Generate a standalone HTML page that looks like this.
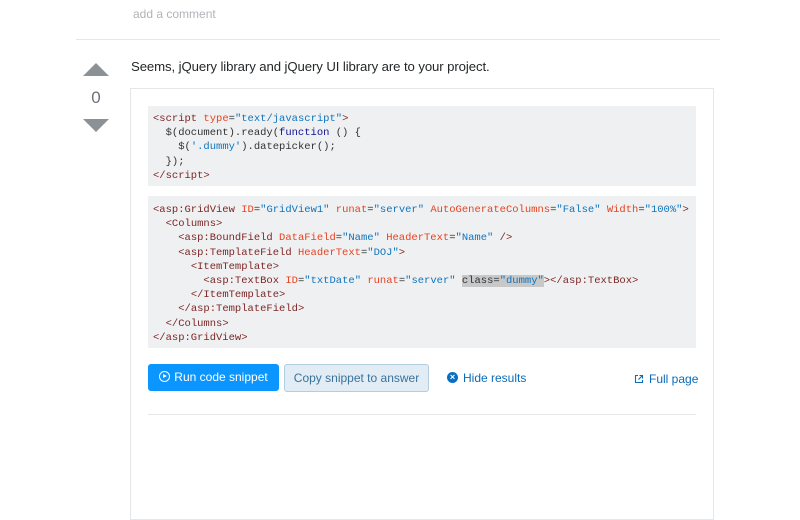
<!DOCTYPE html>
<html><head><style>
body{margin:0;width:800px;height:505px;background:#fff;position:relative;overflow:hidden;font-family:"Liberation Sans",sans-serif}
.a{position:absolute}
pre{margin:0;font-family:"Liberation Mono",monospace;font-size:10.5px;line-height:14.2px;color:#303336}
.t{color:#7d2727}.at{color:#e64320}.s{color:#0f74bd}.k{color:#101094}
</style></head><body>
<div class="a" style="left:133px;top:7px;font-size:12px;color:#b0b4b8">add a comment</div>
<div class="a" style="left:76px;top:39px;width:644px;height:1px;background:#e4e6e8"></div>
<svg class="a" style="left:82px;top:62px" width="28" height="72"><path d="M1 14 L14 1 L27 14Z" fill="#8c9196"/><path d="M1 57 L27 57 L14 70Z" fill="#8c9196"/></svg>
<div class="a" style="left:82px;top:88px;width:28px;text-align:center;font-size:17px;color:#6a737c">0</div>
<div class="a" style="left:131px;top:59px;font-size:13.2px;letter-spacing:-0.1px;color:#242729">Seems, jQuery library and jQuery UI library are to your project.</div>
<div class="a" style="left:130px;top:88px;width:582px;height:430px;border:1px solid #e4e6e8"></div>
<div class="a" style="left:148px;top:106px;width:548px;height:80px;background:#eff0f1"></div>
<pre class="a" style="left:153px;top:112px"><span class="t">&lt;script</span> <span class="at">type</span>=<span class="s">"text/javascript"</span><span class="t">&gt;</span>
  $(document).ready(<span class="k">function</span> () {
    $(<span class="s">'.dummy'</span>).datepicker();
  });
<span class="t">&lt;/script&gt;</span></pre>
<div class="a" style="left:148px;top:196px;width:548px;height:152px;background:#eff0f1"></div>
<pre class="a" style="left:153px;top:203px"><span class="t">&lt;asp:GridView</span> <span class="at">ID</span>=<span class="s">"GridView1"</span> <span class="at">runat</span>=<span class="s">"server"</span> <span class="at">AutoGenerateColumns</span>=<span class="s">"False"</span> <span class="at">Width</span>=<span class="s">"100%"</span><span class="t">&gt;</span>
  <span class="t">&lt;Columns&gt;</span>
    <span class="t">&lt;asp:BoundField</span> <span class="at">DataField</span>=<span class="s">"Name"</span> <span class="at">HeaderText</span>=<span class="s">"Name"</span> <span class="t">/&gt;</span>
    <span class="t">&lt;asp:TemplateField</span> <span class="at">HeaderText</span>=<span class="s">"DOJ"</span><span class="t">&gt;</span>
      <span class="t">&lt;ItemTemplate&gt;</span>
        <span class="t">&lt;asp:TextBox</span> <span class="at">ID</span>=<span class="s">"txtDate"</span> <span class="at">runat</span>=<span class="s">"server"</span> <span style="background:#c8c8c8">class=<span class="s">"dummy"</span></span><span class="t">&gt;&lt;/asp:TextBox&gt;</span>
      <span class="t">&lt;/ItemTemplate&gt;</span>
    <span class="t">&lt;/asp:TemplateField&gt;</span>
  <span class="t">&lt;/Columns&gt;</span>
<span class="t">&lt;/asp:GridView&gt;</span></pre>
<div class="a" style="left:148px;top:364px;width:131px;height:27px;background:#0a95ff;border-radius:3px;color:#fff;font-size:12px;line-height:27px;text-align:center"><span style="display:inline-block;width:9px;height:9px;border:1.3px solid #fff;border-radius:50%;vertical-align:-1px;position:relative;margin-right:4px"><span style="position:absolute;left:3px;top:2px;border-left:4px solid #fff;border-top:2.5px solid transparent;border-bottom:2.5px solid transparent"></span></span>Run code snippet</div>
<div class="a" style="left:284px;top:364px;width:143px;height:26px;background:#e1ecf4;border:1px solid #b3cde0;border-radius:3px;color:#39739d;font-size:12px;line-height:26px;text-align:center">Copy snippet to answer</div>
<div class="a" style="left:447px;top:372px;width:11px;height:11px;border-radius:50%;background:#0a6fc2;color:#fff;font-size:9px;line-height:11px;text-align:center;font-weight:bold">×</div>
<div class="a" style="left:463px;top:371px;font-size:12px;color:#0c6bb8">Hide results</div>
<svg class="a" style="left:634px;top:374px" width="10" height="10"><path d="M4 1.5H1.5V8.5H8.5V6M5.5 1.5H8.5V4.5M8.5 1.5L4.5 5.5" stroke="#0c6bb8" fill="none" stroke-width="1.1"/></svg>
<div class="a" style="left:649px;top:372px;font-size:12px;color:#0c6bb8">Full page</div>
<div class="a" style="left:148px;top:414px;width:548px;height:1px;background:#e4e6e8"></div>
</body></html>
